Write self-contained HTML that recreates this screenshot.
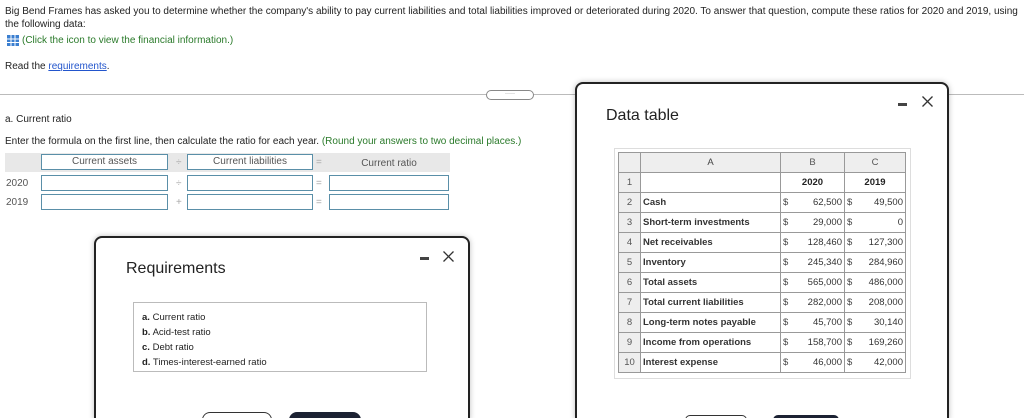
<!DOCTYPE html>
<html style="height:418px;overflow:hidden"><head><style>
body{margin:0;width:1024px;height:418px;overflow:hidden;background:#fff;font-family:"Liberation Sans",Arial,sans-serif;font-size:10px;color:#222;position:relative}
.a{position:absolute;white-space:nowrap}
.inp{position:absolute;border:1px solid #5a8fa8;background:#fff;box-sizing:border-box;height:16px}
.modal{position:absolute;background:#fff;border:2px solid #222;border-bottom:none;border-radius:8px 8px 0 0;box-shadow:0 0 6px rgba(0,0,0,.25);overflow:hidden}
table{border-collapse:collapse;font-size:9.5px}
td{border:1px solid #999;height:20px;padding:0 2px;box-sizing:border-box}
td.n{background:#eee;color:#555;text-align:center}
td.l{font-weight:bold;color:#333}
td.d{border-right:none;color:#444}
td.v{border-left:none;text-align:right;color:#333}
.btn{position:absolute;border-radius:10px 10px 0 0;height:20px;box-sizing:border-box;border-bottom:none!important}
</style></head><body>
<div class="a" style="left:5px;top:6px">Big Bend Frames has asked you to determine whether the company's ability to pay current liabilities and total liabilities improved or deteriorated during 2020. To answer that question, compute these ratios for 2020 and 2019, using</div>
<div class="a" style="left:5px;top:19px">the following data:</div>
<svg class="a" style="left:7px;top:35px" width="12" height="11"><rect width="12" height="11" fill="#3b7fd0"/><path d="M4 0V11M8 0V11M0 4H12M0 7.5H12" stroke="#fff" stroke-width="1"/></svg>
<div class="a" style="left:22px;top:35px;color:#2a7a2a">(Click the icon to view the financial information.)</div>
<div class="a" style="left:5px;top:61px">Read the <span style="color:#2255cc;text-decoration:underline">requirements</span>.</div>
<div class="a" style="left:0;top:94px;width:1024px;height:1px;background:#bbb"></div>
<div class="a" style="left:486px;top:90px;width:46px;height:8px;border:1px solid #888;border-radius:5px;background:#fff;font-size:6px;text-align:center;line-height:7px;color:#666">·····</div>
<div class="a" style="left:5px;top:114px">a. Current ratio</div>
<div class="a" style="left:5px;top:136px">Enter the formula on the first line, then calculate the ratio for each year. <span style="color:#2a7a2a">(Round your answers to two decimal places.)</span></div>
<div class="a" style="left:5px;top:153px;width:445px;height:19px;background:#e8e8e8"></div>
<div class="inp" style="left:41px;top:154px;width:127px;text-align:center;color:#555;line-height:13px">Current assets</div>
<div class="a" style="left:176px;top:157px;color:#aaa">÷</div>
<div class="inp" style="left:187px;top:154px;width:126px;text-align:center;color:#555;line-height:13px">Current liabilities</div>
<div class="a" style="left:316px;top:157px;color:#aaa">=</div>
<div class="a" style="left:329px;top:158px;width:120px;text-align:center;color:#555">Current ratio</div>
<div class="a" style="left:6px;top:178px;color:#555">2020</div>
<div class="inp" style="left:41px;top:175px;width:127px"></div>
<div class="a" style="left:176px;top:178px;color:#aaa">÷</div>
<div class="inp" style="left:187px;top:175px;width:126px"></div>
<div class="a" style="left:316px;top:178px;color:#aaa">=</div>
<div class="inp" style="left:329px;top:175px;width:120px"></div>
<div class="a" style="left:6px;top:197px;color:#555">2019</div>
<div class="inp" style="left:41px;top:194px;width:127px"></div>
<div class="a" style="left:176px;top:197px;color:#aaa">+</div>
<div class="inp" style="left:187px;top:194px;width:126px"></div>
<div class="a" style="left:316px;top:197px;color:#aaa">=</div>
<div class="inp" style="left:329px;top:194px;width:120px"></div>

<div class="modal" style="left:94px;top:236px;width:372px;height:182px">
<div class="a" style="left:30px;top:22px;font-size:16px;color:#222">Requirements</div>
<div class="a" style="left:324px;top:19px;width:9px;height:3px;background:#444"></div>
<svg class="a" style="left:347px;top:13px" width="11" height="11"><path d="M0.5 0.5L10.5 10.5M10.5 0.5L0.5 10.5" stroke="#333" stroke-width="1.3"/></svg>
<div class="a" style="left:37px;top:64px;width:294px;height:70px;border:1px solid #bbb;font-size:9.5px;line-height:15px;padding:7px 0 0 8px;box-sizing:border-box">
<b>a.</b> Current ratio<br><b>b.</b> Acid-test ratio<br><b>c.</b> Debt ratio<br><b>d.</b> Times-interest-earned ratio</div>
<div class="btn" style="left:106px;top:174px;width:70px;height:8px;border:1px solid #333"></div>
<div class="btn" style="left:193px;top:174px;width:72px;height:8px;background:#1c2233"></div>
</div>

<div class="modal" style="left:575px;top:82px;width:370px;height:336px">
<div class="a" style="left:29px;top:23px;font-size:16px;color:#222">Data table</div>
<div class="a" style="left:321px;top:19px;width:9px;height:3px;background:#444"></div>
<svg class="a" style="left:345px;top:12px" width="11" height="11"><path d="M0.5 0.5L10.5 10.5M10.5 0.5L0.5 10.5" stroke="#333" stroke-width="1.3"/></svg>
<div class="a" style="left:37px;top:64px;width:295px;height:229px;border:1px solid #ddd"></div>
<table class="a" style="left:41px;top:68px;width:287px;table-layout:fixed">
<colgroup><col style="width:22px"><col style="width:140px"><col style="width:12px"><col style="width:52px"><col style="width:12px"><col style="width:49px"></colgroup>
<tr><td class="n"></td><td class="n" style="color:#444">A</td><td class="n" colspan="2">B</td><td class="n" colspan="2">C</td></tr>
<tr><td class="n">1</td><td></td><td colspan="2" style="text-align:center;font-weight:bold">2020</td><td colspan="2" style="text-align:center;font-weight:bold">2019</td></tr>
<tr><td class="n">2</td><td class="l">Cash</td><td class="d">$</td><td class="v">62,500</td><td class="d">$</td><td class="v">49,500</td></tr>
<tr><td class="n">3</td><td class="l">Short-term investments</td><td class="d">$</td><td class="v">29,000</td><td class="d">$</td><td class="v">0</td></tr>
<tr><td class="n">4</td><td class="l">Net receivables</td><td class="d">$</td><td class="v">128,460</td><td class="d">$</td><td class="v">127,300</td></tr>
<tr><td class="n">5</td><td class="l">Inventory</td><td class="d">$</td><td class="v">245,340</td><td class="d">$</td><td class="v">284,960</td></tr>
<tr><td class="n">6</td><td class="l">Total assets</td><td class="d">$</td><td class="v">565,000</td><td class="d">$</td><td class="v">486,000</td></tr>
<tr><td class="n">7</td><td class="l">Total current liabilities</td><td class="d">$</td><td class="v">282,000</td><td class="d">$</td><td class="v">208,000</td></tr>
<tr><td class="n">8</td><td class="l">Long-term notes payable</td><td class="d">$</td><td class="v">45,700</td><td class="d">$</td><td class="v">30,140</td></tr>
<tr><td class="n">9</td><td class="l">Income from operations</td><td class="d">$</td><td class="v">158,700</td><td class="d">$</td><td class="v">169,260</td></tr>
<tr><td class="n">10</td><td class="l">Interest expense</td><td class="d">$</td><td class="v">46,000</td><td class="d">$</td><td class="v">42,000</td></tr>
</table>
<div class="btn" style="left:108px;top:331px;width:62px;height:5px;border:1px solid #333"></div>
<div class="btn" style="left:196px;top:331px;width:66px;height:5px;background:#1c2233"></div>
</div>
</body></html>
